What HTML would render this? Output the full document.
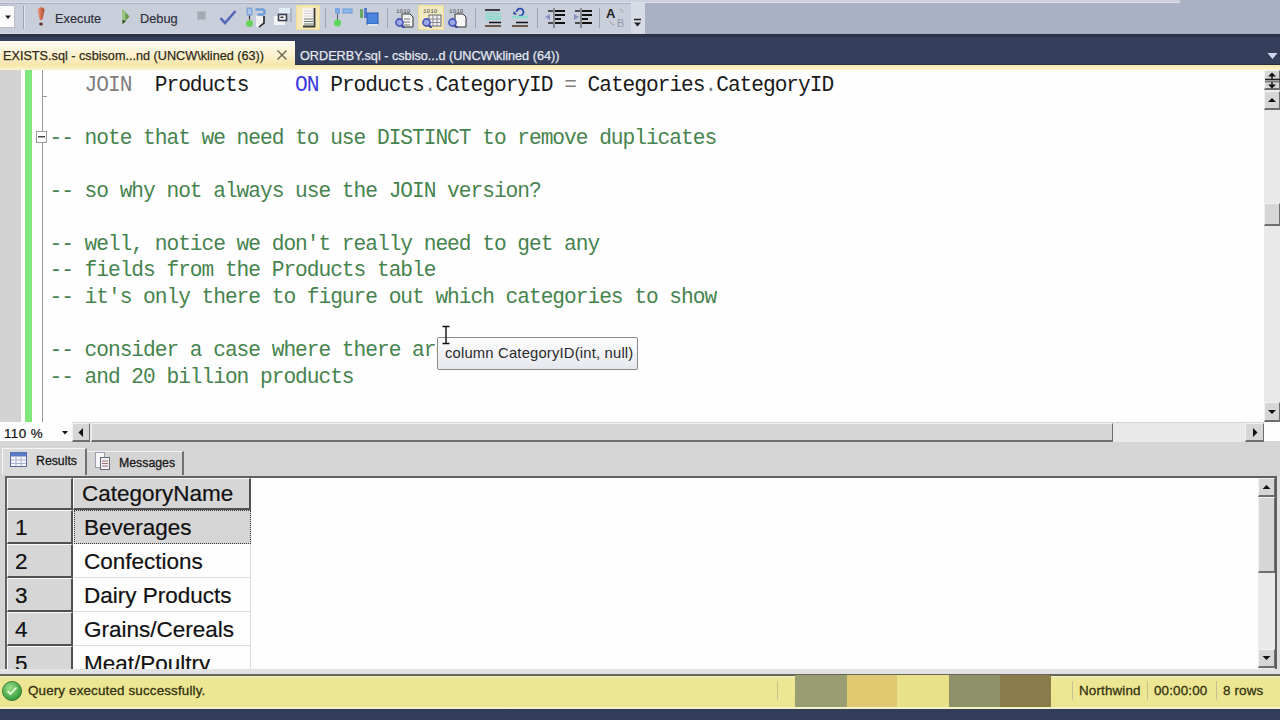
<!DOCTYPE html>
<html><head><meta charset="utf-8">
<style>
*{margin:0;padding:0;box-sizing:border-box}
html,body{width:1280px;height:720px;overflow:hidden;background:#2f3a57;font-family:"Liberation Sans",sans-serif}
.a{position:absolute}
#tb{left:0;top:0;width:1280px;height:34px;background:#aab1c5}
#tbtop{left:0;top:0;width:1180px;height:3px;background:#cdd1dd;border-bottom:1px solid #dcdfe8}
#tbar{left:0;top:4px;width:645px;height:30px;background:#c9cedb;border-bottom:1px solid #d6d9e3}
#tabs{left:0;top:34px;width:1280px;height:31px;background:#353f5c;border-bottom:1px solid #283040}
#tabsdark{left:0;top:34px;width:1280px;height:4px;background:linear-gradient(#262c3e 0px,#262c3e 1px,#323a52 1px,#323a52 2px,#2a3146 2px,#2a3146 3px,#343d58 3px)}
#tab1{left:0;top:41px;width:295px;height:24px;background:linear-gradient(#fefcf2 0px,#fdf8e4 5px,#fbf1cf 14px,#f8eab8 20px,#f6e6a8 24px)}
#ystrip{left:0;top:65px;width:1280px;height:5px;background:linear-gradient(#f6e6a6,#f9eec0 60%,#fbf4d8)}
.tt{-webkit-text-stroke:0.25px currentColor;font-size:13.5px;white-space:pre;line-height:16px;transform:scaleX(0.938);transform-origin:0 0}
#editor{left:0;top:70px;width:1264px;height:352px;background:#fefefe;overflow:hidden}
#gm{left:0;top:0;width:21px;height:352px;background:#d3d3d3}
#gb{left:25px;top:0;width:7px;height:352px;background:#7fe77a}
#ol{left:41.5px;top:0;width:1.5px;height:352px;background:#9a9a9a}
.ln{position:absolute;left:49.5px;font-family:"Liberation Mono",monospace;font-size:21.2px;letter-spacing:-1.02px;white-space:pre;line-height:26.636px;height:26.636px}
.tbt{-webkit-text-stroke:0.15px currentColor;font-size:12.8px;line-height:16px;color:#2d2f3a;white-space:pre}
.btn{background:#d6d6d6;border-top:1px solid #f2f2f2;border-left:1px solid #f2f2f2;border-right:1px solid #6e6e6e;border-bottom:2px solid #6e6e6e}
.rt{-webkit-text-stroke:0.3px currentColor;font-size:12.3px;line-height:16px;color:#1a1a1a;white-space:pre}
.hc{background:#d6d6d6;border-top:1px solid #fafafa;border-left:1px solid #fafafa;border-right:2px solid #505050;border-bottom:2px solid #505050}
.dc{background:#fdfdfd;border-right:1px solid #dcdcdc;border-bottom:1px solid #dcdcdc}
.gt{-webkit-text-stroke:0.2px currentColor;font-size:22.5px;line-height:26px;color:#111;white-space:pre}
.st{-webkit-text-stroke:0.3px currentColor;letter-spacing:0.15px;font-size:13.4px;line-height:16px;color:#34320f;white-space:pre}
.c{color:#47834e}
.k{color:#3a3adf}
.g{color:#7f7f7f}
.b{color:#1a1a1a}
</style></head><body>
<div id="tb" class="a"></div>
<div id="tbtop" class="a"></div>
<div id="tbar" class="a"></div>

<!-- toolbar content -->
<div class="a" style="left:0;top:5px;width:15px;height:23px;background:#fbfbfc;border:1px solid #b9bdc9;border-left:none"></div>
<svg class="a" style="left:4px;top:14px" width="9" height="6"><path d="M1 1.5h6l-3 3.5z" fill="#1a1a1a"/></svg>
<div class="a" style="left:23px;top:6px;width:1px;height:23px;background:#9ea3b3"></div>
<div class="a" style="left:24px;top:6px;width:1px;height:23px;background:#e4e6ee"></div>
<svg class="a" style="left:35px;top:6px" width="12" height="22"><defs><linearGradient id="ex" x1="0" y1="0" x2="1" y2="0"><stop offset="0" stop-color="#e9a58f"/><stop offset="0.5" stop-color="#d0704f"/><stop offset="1" stop-color="#a84a34"/></linearGradient></defs><path d="M2.5 4 Q3 1.2 6 1.2 Q9 1.2 9.5 4 L7.5 13.5 Q6 15 4.5 13.5 Z" fill="url(#ex)"/><ellipse cx="6" cy="18" rx="1.8" ry="1.6" fill="#5a3028"/></svg>
<div class="a tbt" style="left:55px;top:11px">Execute</div>
<svg class="a" style="left:120px;top:7px" width="13" height="19"><path d="M1.5 1 L10 9.5 L1.5 18 Z" fill="#d6e8cc" opacity="0.7"/><path d="M2.5 2 L9.5 9.5 L2.5 17 Z" fill="#5f9848"/><path d="M2.5 2 L5.5 5.5 L5.5 14 L2.5 17Z" fill="#9cc488"/><path d="M2.5 13 L6 14 L2.5 17Z" fill="#2a4020"/></svg>
<div class="a tbt" style="left:140px;top:11px">Debug</div>
<div class="a" style="left:197px;top:11px;width:9px;height:9px;background:#a7aab2;border:1px solid #b6b9c2"></div>
<svg class="a" style="left:219px;top:9px" width="18" height="16"><path d="M1.5 9 L6 14 L16.5 2" stroke="#5566b8" stroke-width="2.6" fill="none"/></svg>
<svg class="a" style="left:245px;top:6px" width="22" height="22"><rect x="1.5" y="1.5" width="6" height="8" fill="#7fa6d8"/><rect x="3" y="3" width="3" height="5" fill="#a9c8ee"/><path d="M10.5 3.5h7q2 0 2 2.5q0 2.5-2 2.5h-5" stroke="#6e9ed6" stroke-width="2.4" fill="none"/><path d="M4.5 9.5v4" stroke="#333" stroke-width="1.2"/><circle cx="4.5" cy="17.5" r="3.5" fill="#66d25a"/><path d="M11 10h8v7l-5 4h-3z" fill="#f0f0f2"/><path d="M19 10v7l-5 4" stroke="#222" stroke-width="1.6" fill="none"/></svg>
<svg class="a" style="left:273px;top:6px" width="20" height="22"><rect x="6" y="2" width="12" height="5" fill="#e2ecf8"/><path d="M18 2v14" stroke="#8a94b0" stroke-width="1"/><rect x="1" y="10" width="11" height="9" fill="#f2f4f8"/><rect x="5.5" y="8.5" width="8" height="6" fill="#f8f8fa" stroke="#3a4050" stroke-width="1.6"/><rect x="7.5" y="10.5" width="3" height="1.5" fill="#333"/></svg>
<div class="a" style="left:296px;top:5px;width:24px;height:25px;background:#f3e8b6;border:1px solid #efdd96"></div>
<svg class="a" style="left:301px;top:7px" width="16" height="21"><rect x="1.5" y="1.5" width="12" height="17" fill="#f6f6f6"/><path d="M3 4h9M3 6.5h9M3 9h9" stroke="#d8d0d0" stroke-width="1"/><path d="M3 12h9M3 14.5h9M3 17h9" stroke="#6a7a6a" stroke-width="1.2"/><path d="M13.5 1v18.5H2" stroke="#3a3a3a" stroke-width="1.8" fill="none"/></svg>
<div class="a" style="left:325px;top:8px;width:1px;height:20px;background:#9ea3b3"></div>
<svg class="a" style="left:333px;top:7px" width="22" height="21"><rect x="2" y="1" width="5" height="6" fill="#7aa8e2"/><rect x="10" y="2" width="9" height="4" fill="#8db8ea" stroke="#6b9bd8"/><path d="M4.5 7v6" stroke="#555"/><circle cx="4.5" cy="16" r="3.5" fill="#5fd75c"/></svg>
<svg class="a" style="left:359px;top:7px" width="22" height="21"><rect x="1" y="2" width="3" height="9" fill="#6aa86a"/><rect x="5" y="1" width="3" height="10" fill="#5a7ad0"/><rect x="8" y="6" width="11" height="11" fill="#4a86e0" stroke="#2a5ab0"/><rect x="9" y="17" width="10" height="2" fill="#dfe3ec"/></svg>
<div class="a" style="left:387px;top:8px;width:1px;height:20px;background:#9ea3b3"></div>
<svg class="a" style="left:394px;top:7px" width="22" height="21"><text x="2" y="6" font-size="6" font-family="Liberation Mono" fill="#555">1010</text><path d="M8 7h8l3 3v10H8z" fill="#f4f4f4" stroke="#333"/><path d="M10 12h6M10 15h6M10 18h6" stroke="#777"/><circle cx="5.5" cy="15.5" r="3.6" fill="#9aa6e6" stroke="#4a56b8" stroke-width="1.6"/><path d="M7.5 18l3 3" stroke="#3a46a0" stroke-width="2"/></svg>
<div class="a" style="left:418px;top:5px;width:26px;height:25px;background:#f3eac0;border:1px solid #efdc90"></div>
<svg class="a" style="left:421px;top:7px" width="22" height="21"><text x="2" y="6" font-size="6" font-family="Liberation Mono" fill="#555">1010</text><rect x="8" y="8" width="12" height="11" fill="#f4f4f8" stroke="#666"/><path d="M8 12h12M8 15.5h12M12 8v11M16 8v11" stroke="#888"/><circle cx="5.5" cy="15.5" r="3.6" fill="#9aa6e6" stroke="#4a56b8" stroke-width="1.6"/><path d="M7.5 18l3 3" stroke="#3a46a0" stroke-width="2"/></svg>
<svg class="a" style="left:447px;top:7px" width="22" height="21"><text x="2" y="6" font-size="6" font-family="Liberation Mono" fill="#555">1010</text><path d="M8 7h8l3 3v10H8z" fill="#f6f6f6" stroke="#333"/><circle cx="5.5" cy="15.5" r="3.6" fill="#9aa6e6" stroke="#4a56b8" stroke-width="1.6"/><path d="M7.5 18l3 3" stroke="#3a46a0" stroke-width="2"/></svg>
<div class="a" style="left:475px;top:8px;width:1px;height:20px;background:#9ea3b3"></div>
<svg class="a" style="left:484px;top:7px" width="20" height="21"><path d="M1 3h15" stroke="#111" stroke-width="1.5"/><path d="M1 6.5h16M1 9.5h16M1 12h16" stroke="#8fdccc" stroke-width="2"/><path d="M5 15.5h12" stroke="#111" stroke-width="1.5"/><path d="M1 19h16" stroke="#6a5a4a" stroke-width="2"/></svg>
<svg class="a" style="left:511px;top:7px" width="20" height="21"><path d="M5.5 5 A3.5 3.5 0 1 1 8 8.5" stroke="#2a4ab0" stroke-width="1.8" fill="none"/><path d="M2.5 4l3.5 3.5h-3.5z" fill="#1a3a90"/><path d="M1 10h16" stroke="#8fdccc" stroke-width="2.5"/><path d="M5 15.5h12" stroke="#111" stroke-width="1.5"/><path d="M1 19h16" stroke="#6a5a4a" stroke-width="2"/></svg>
<div class="a" style="left:537px;top:8px;width:1px;height:20px;background:#9ea3b3"></div>
<svg class="a" style="left:544px;top:7px" width="22" height="21"><path d="M10 1v20" stroke="#444"/><path d="M11 4h10M11 8h10M11 12h6M11 16h10" stroke="#111" stroke-width="2"/><path d="M4 4h5M4 16h5" stroke="#222" stroke-width="1.5"/><path d="M1 10l5-3v6z" fill="#8890c8"/></svg>
<svg class="a" style="left:571px;top:7px" width="22" height="21"><path d="M10 1v20" stroke="#444"/><path d="M11 4h10M11 8h10M11 12h6M11 16h10" stroke="#111" stroke-width="2"/><path d="M4 4h5M4 16h5" stroke="#222" stroke-width="1.5"/><path d="M8 10l-5-3v6z" fill="#8890c8"/></svg>
<div class="a" style="left:599px;top:8px;width:1px;height:20px;background:#9ea3b3"></div>
<svg class="a" style="left:606px;top:6px" width="22" height="22"><text x="0" y="12" font-size="13" font-weight="bold" font-family="Liberation Sans" fill="#222">A</text><text x="11" y="21" font-size="11" font-family="Liberation Sans" fill="#9a9aa6">B</text><path d="M4 15q1 4 5 4" stroke="#aaa" fill="none"/><path d="M13 3q4 0 4 4" stroke="#aaa" fill="none"/></svg>
<div class="a" style="left:631px;top:3px;width:14px;height:30px;background:#d7dbe6"></div>
<svg class="a" style="left:633px;top:18px" width="10" height="10"><path d="M1 1.5h7" stroke="#222" stroke-width="1.5"/><path d="M1 4.5h7l-3.5 4z" fill="#222"/></svg>
<div id="tabs" class="a"></div>
<div id="tabsdark" class="a"></div>
<div id="ystrip" class="a"></div>
<div id="tab1" class="a"></div>
<div class="a tt" style="left:3px;top:48px;color:#2e2a18">EXISTS.sql - csbisom...nd (UNCW\klined (63))</div>
<div class="a tt" style="left:300px;top:48px;color:#e6e9f0">ORDERBY.sql - csbiso...d (UNCW\klined (64))</div>


<svg class="a" style="left:276px;top:49px" width="12" height="12"><path d="M1.5 1.5L10.5 10.5M10.5 1.5L1.5 10.5" stroke="#6a6450" stroke-width="1.4"/></svg>
<svg class="a" style="left:1267px;top:52px" width="12" height="8"><path d="M0.5 1h10l-5 6z" fill="#d4d8ee"/></svg>
<div id="editor" class="a">
  <div id="gm" class="a"></div>
  <div id="gb" class="a"></div>
  <div id="ol" class="a"></div>

  <div class="a" style="left:42px;top:26px;width:5px;height:1px;background:#9a9a9a"></div>
  <div class="a" style="left:36px;top:61px;width:11px;height:12px;background:#fefefe;border:1px solid #9a9a9a"></div>
  <div class="a" style="left:38px;top:66px;width:7px;height:1px;background:#444"></div><div class="a" style="left:38px;top:67px;width:7px;height:1px;background:#aaa"></div>
  <div class="ln" style="top:1.5px"><span class="g">   JOIN</span>  <span class="b">Products</span>    <span class="k">ON</span> <span class="b">Products</span><span class="g">.</span><span class="b">CategoryID</span> <span class="g">=</span> <span class="b">Categories</span><span class="g">.</span><span class="b">CategoryID</span></div>
  <div class="ln c" style="top:54.6px">-- note that we need to use DISTINCT to remove duplicates</div>
  <div class="ln c" style="top:107.7px">-- so why not always use the JOIN version?</div>
  <div class="ln c" style="top:160.8px">-- well, notice we don't really need to get any</div>
  <div class="ln c" style="top:187.35px">-- fields from the Products table</div>
  <div class="ln c" style="top:213.9px">-- it's only there to figure out which categories to show</div>
  <div class="ln c" style="top:267px">-- consider a case where there are 8 categories</div>
  <div class="ln c" style="top:293.55px">-- and 20 billion products</div>

</div>

<!-- editor v scrollbar -->
<div class="a" style="left:1264px;top:70px;width:16px;height:352px;background:#e9e9e9"></div>
<div class="a btn" style="left:1264px;top:70px;width:16px;height:20px"></div>
<svg class="a" style="left:1264px;top:71px" width="16" height="19"><path d="M8 1.5l-4 4h8z M8 17.5l-4-4h8z" fill="#111"/><path d="M1 8.5h15" stroke="#222" stroke-width="1.6"/><path d="M1 10.8h15" stroke="#555" stroke-width="1"/><path d="M8 5v3M8 11v3" stroke="#111" stroke-width="1.4"/></svg>
<div class="a btn" style="left:1264px;top:91px;width:16px;height:19px"></div>
<svg class="a" style="left:1264px;top:91px" width="16" height="19"><path d="M8 7l-4 4h8z" fill="#111"/></svg>
<div class="a btn" style="left:1264px;top:203px;width:16px;height:23px"></div>
<div class="a btn" style="left:1264px;top:402px;width:16px;height:20px"></div>
<svg class="a" style="left:1264px;top:402px" width="16" height="20"><path d="M4 8h8l-4 4z" fill="#111"/></svg>

<!-- zoom + h scroll -->
<div class="a" style="left:0;top:422px;width:1280px;height:253px;background:#d5d5d5"></div>
<div class="a" style="left:0;top:422px;width:72px;height:19px;background:#fdfdfd"></div>
<div class="a" style="left:4px;top:425.5px;font-size:13.4px;letter-spacing:0.4px;-webkit-text-stroke:0.2px #111;line-height:16px;color:#111;white-space:pre">110 %</div>
<svg class="a" style="left:61px;top:430px" width="9" height="6"><path d="M1 1h6l-3 3.5z" fill="#111"/></svg>
<div class="a" style="left:72px;top:423px;width:1192px;height:19px;background:#e9e9e9"></div>
<div class="a btn" style="left:72px;top:423px;width:18px;height:19px"></div>
<svg class="a" style="left:72px;top:423px" width="18" height="19"><path d="M11 5v9l-4.5-4.5z" fill="#111"/></svg>
<div class="a btn" style="left:91px;top:423px;width:1022px;height:19px"></div>
<div class="a btn" style="left:1245px;top:423px;width:19px;height:19px"></div>
<svg class="a" style="left:1245px;top:423px" width="19" height="19"><path d="M8 5v9l4.5-4.5z" fill="#111"/></svg>
<div class="a" style="left:1264px;top:422px;width:16px;height:19px;background:#fdfdfd"></div>

<!-- results tabs -->
<div class="a" style="left:2px;top:448px;width:85px;height:27px;background:#dadada;border-top:1px solid #f4f4f4;border-left:1px solid #f4f4f4;border-right:2px solid #707070"></div>
<div class="a" style="left:87px;top:451px;width:97px;height:24px;background:#d4d4d4;border-top:1px solid #f0f0f0;border-right:2px solid #707070"></div>
<svg class="a" style="left:9px;top:451px" width="19" height="17"><rect x="1.5" y="1.5" width="16" height="14" fill="#f6f6fa" stroke="#5a6a9a"/><rect x="1.5" y="1.5" width="16" height="4" fill="#5a7ac8"/><path d="M2 9h15M2 12.5h15M7 5v10M12 5v10" stroke="#a8b0d0"/></svg>
<div class="a rt" style="left:36px;top:453px">Results</div>
<svg class="a" style="left:94px;top:451px" width="18" height="20"><rect x="1.5" y="1.5" width="9" height="15" fill="#f6f6f8" stroke="#9aa0b0"/><rect x="6.5" y="6.5" width="9" height="12" fill="#f2f2f4" stroke="#6a6a78"/><path d="M8 10h6M8 12.5h6M8 15h6" stroke="#a07070"/></svg>
<div class="a rt" style="left:119px;top:455px">Messages</div>

<!-- grid -->
<div class="a" style="left:5px;top:476px;width:1272px;height:194px;background:#fdfdfd;border-left:2px solid #606060;border-top:2px solid #606060"></div>
<div class="a hc" style="left:7px;top:478px;width:66px;height:32px"></div>
<div class="a hc" style="left:73px;top:478px;width:178px;height:32px"></div>
<div class="a gt" style="left:82px;top:481px">CategoryName</div>
<div class="a hc" style="left:7px;top:510px;width:66px;height:34px"></div>
<div class="a hc" style="left:7px;top:544px;width:66px;height:34px"></div>
<div class="a hc" style="left:7px;top:578px;width:66px;height:34px"></div>
<div class="a hc" style="left:7px;top:612px;width:66px;height:34px"></div>
<div class="a hc" style="left:7px;top:646px;width:66px;height:24px;border-bottom:none"></div>
<div class="a gt" style="left:15px;top:515px">1</div>
<div class="a gt" style="left:15px;top:549px">2</div>
<div class="a gt" style="left:15px;top:583px">3</div>
<div class="a gt" style="left:15px;top:617px">4</div>
<div class="a gt" style="left:15px;top:651px">5</div>
<div class="a" style="left:74px;top:510px;width:177px;height:34px;background:#d6d6d6;border:1px dotted #333"></div>
<div class="a dc" style="left:74px;top:544px;width:177px;height:34px"></div>
<div class="a dc" style="left:74px;top:578px;width:177px;height:34px"></div>
<div class="a dc" style="left:74px;top:612px;width:177px;height:34px"></div>
<div class="a dc" style="left:74px;top:646px;width:177px;height:24px"></div>
<div class="a gt" style="left:84px;top:515px">Beverages</div>
<div class="a gt" style="left:84px;top:549px">Confections</div>
<div class="a gt" style="left:84px;top:583px">Dairy Products</div>
<div class="a gt" style="left:84px;top:617px">Grains/Cereals</div>
<div class="a gt" style="left:84px;top:651px;height:18px;overflow:hidden">Meat/Poultry</div>
<!-- grid scrollbar -->
<div class="a" style="left:1258px;top:478px;width:17px;height:191px;background:#e9e9e9"></div>
<div class="a btn" style="left:1258px;top:478px;width:17px;height:19px"></div>
<svg class="a" style="left:1258px;top:478px" width="17" height="18"><path d="M8.5 7l-4 4h8z" fill="#111"/></svg>
<div class="a btn" style="left:1258px;top:497px;width:17px;height:76px"></div>
<div class="a btn" style="left:1258px;top:649px;width:17px;height:19px"></div>
<svg class="a" style="left:1258px;top:649px" width="17" height="19"><path d="M4.5 7h8l-4 4z" fill="#111"/></svg>
<div class="a" style="left:1275px;top:476px;width:2px;height:194px;background:#5e5e5e"></div><div class="a" style="left:1277px;top:476px;width:3px;height:194px;background:#dedede"></div>

<!-- status -->
<div class="a" style="left:0;top:669px;width:1280px;height:5px;background:#e2e2e2"></div>
<div class="a" style="left:0;top:674px;width:1280px;height:2px;background:#66665a"></div>
<div class="a" style="left:0;top:676px;width:1280px;height:32px;background:linear-gradient(#f3eebc 0px,#ede694 3px,#ece590 100%)"></div>
<div class="a" style="left:0;top:707px;width:1280px;height:2px;background:#f6f2c8"></div>
<div class="a" style="left:0;top:709px;width:1280px;height:11px;background:#323d5a"></div>
<svg class="a" style="left:1px;top:680px" width="22" height="22"><defs><radialGradient id="gg" cx="40%" cy="35%" r="65%"><stop offset="0" stop-color="#9fe08a"/><stop offset="1" stop-color="#2f9a3a"/></radialGradient></defs><circle cx="11" cy="11" r="9.5" fill="url(#gg)" stroke="#3a7a3a" stroke-width="1"/><path d="M6.5 11l3 3L15.5 7.5" stroke="#e8ffe0" stroke-width="1.8" fill="none"/></svg>
<div class="a st" style="left:28px;top:683px">Query executed successfully.</div>
<div class="a" style="left:777px;top:681px;width:1px;height:19px;background:#c8c090"></div>
<div class="a" style="left:795px;top:675px;width:52px;height:32px;background:#9a9d71"></div>
<div class="a" style="left:847px;top:675px;width:50px;height:32px;background:#dfca72"></div>
<div class="a" style="left:897px;top:675px;width:52px;height:32px;background:#e8e18a"></div>
<div class="a" style="left:949px;top:675px;width:51px;height:32px;background:#8e916a"></div>
<div class="a" style="left:1000px;top:675px;width:51px;height:32px;background:#897c4a"></div>
<div class="a" style="left:1072px;top:681px;width:1px;height:19px;background:#c8c090"></div>
<div class="a st" style="left:1079px;top:683px">Northwind</div>
<div class="a" style="left:1147px;top:681px;width:1px;height:19px;background:#c8c090"></div>
<div class="a st" style="left:1154px;top:683px">00:00:00</div>
<div class="a" style="left:1216px;top:681px;width:1px;height:19px;background:#c8c090"></div>
<div class="a st" style="left:1223px;top:683px">8 rows</div>

<!-- tooltip -->
<div class="a" style="left:437px;top:337px;width:201px;height:33px;background:linear-gradient(#fdfdfd,#e6e8ee);border:1px solid #8a8a8a;border-radius:2px"></div>
<div class="a" style="left:445px;top:345px;font-size:14.8px;letter-spacing:0.18px;line-height:17px;color:#2a2a2a;white-space:pre">column CategoryID(int, null)</div>
<svg class="a" style="left:440px;top:325px" width="12" height="20"><path d="M2.5 1.5h7M6 1.5v17M2.5 18.5h7" stroke="#111" stroke-width="1.4"/></svg>
</body></html>
